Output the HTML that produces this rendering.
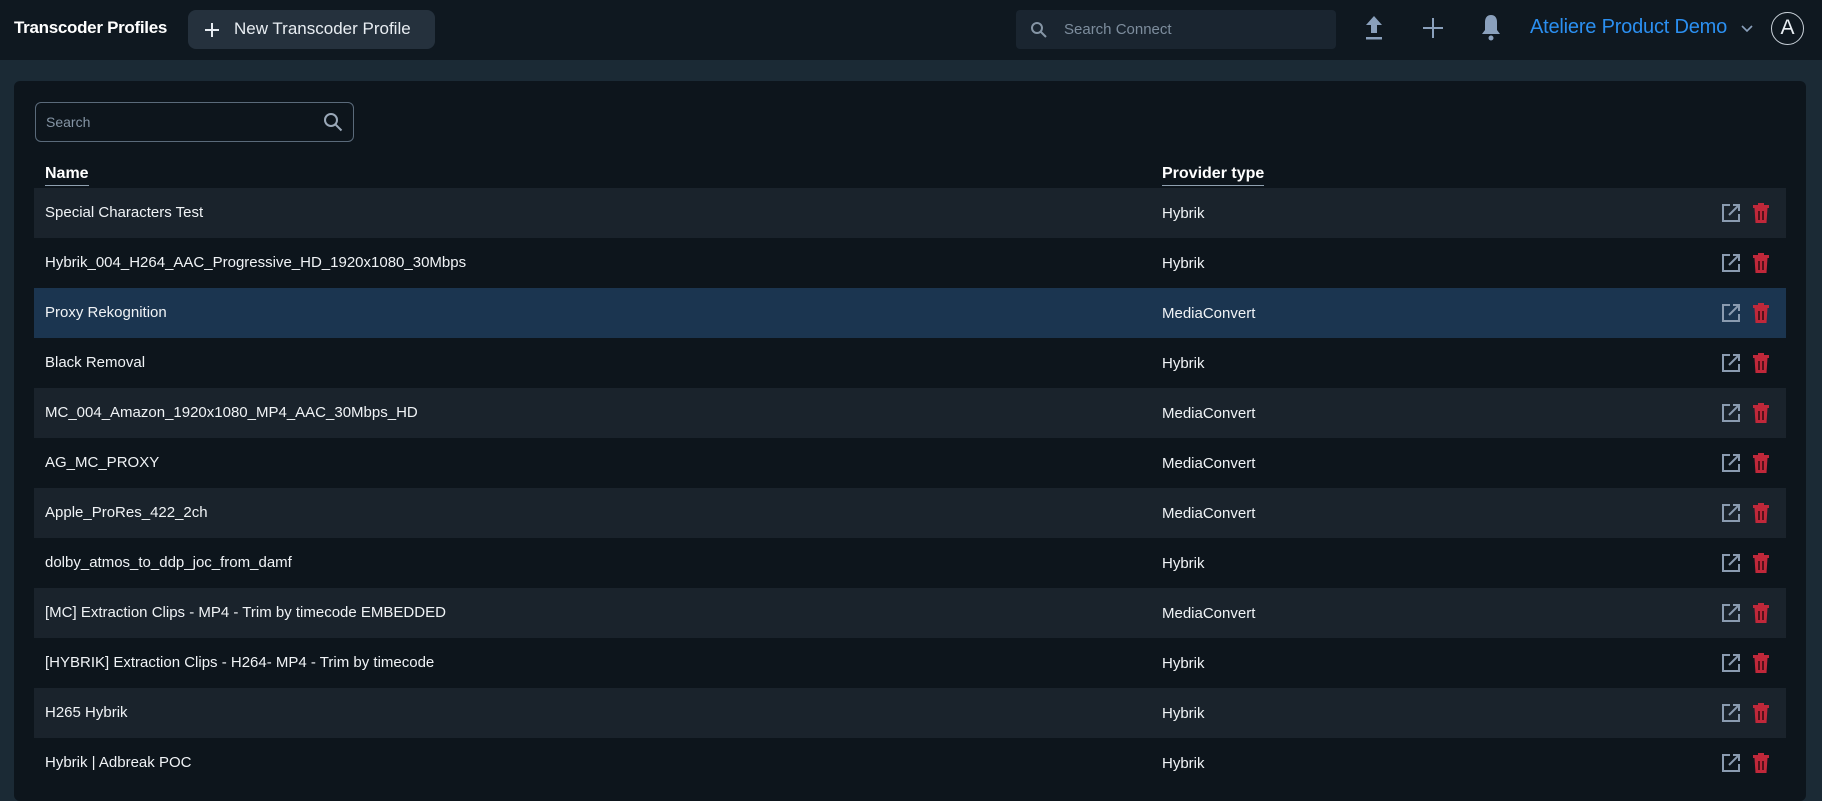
<!DOCTYPE html>
<html><head><meta charset="utf-8"><style>
*{box-sizing:border-box;margin:0;padding:0}
body{width:1822px;height:787px;overflow:hidden;background:#1b2a35;font-family:"Liberation Sans",sans-serif;color:#e8edf2;position:relative}
.hdr{position:absolute;left:0;top:0;width:1822px;height:60px;background:#0f1820}
.title{position:absolute;left:14px;top:18px;font-size:17px;font-weight:bold;color:#fff;letter-spacing:-0.3px}
.btn{position:absolute;left:188px;top:10px;width:247px;height:39px;background:#25313d;border-radius:8px;color:#e8edf2;font-size:17px}
.btn span{position:absolute;left:46px;top:9px}
.sc{position:absolute;left:1016px;top:10px;width:320px;height:39px;background:#1a2530;border-radius:4px}
.sc span{position:absolute;left:48px;top:11px;font-size:15px;color:#7d8d9d}
.org{position:absolute;left:1530px;top:16px;font-size:20px;color:#2b8ff0;letter-spacing:-0.2px}
.av{position:absolute;left:1771px;top:12px;width:33px;height:33px;border:1.5px solid #c8d0d8;border-radius:50%;color:#e8edf2;font-size:21px;text-align:center;line-height:30px}
.panel{position:absolute;left:14px;top:81px;width:1792px;height:720px;background:#0d151c;border-radius:6px}
.srch{position:absolute;left:35px;top:102px;width:319px;height:40px;border:1.5px solid #5a6a7a;border-radius:6px}
.srch span{position:absolute;left:10px;top:11px;font-size:14px;color:#8595a5}
.th{position:absolute;top:165px;font-size:16px;font-weight:bold;color:#fff;border-bottom:1.5px solid #8fa0b0;padding-bottom:2px}
.row{position:absolute;left:34px;width:1752px;height:50px;font-size:15px;color:#f0f3f6}
.row .n{position:absolute;left:11px;top:16px}
.row .p{position:absolute;left:1128px;top:17px}
.row svg{position:absolute;top:15px}
.o{background:#1a232c}.sel{background:#1b3550}
</style></head><body>
<div class="hdr">
<div class="title">Transcoder Profiles</div>
<div class="btn"><svg style="position:absolute;left:16px;top:12px" width="16" height="16"><path d="M8 1v14M1 8h14" stroke="#e8edf2" stroke-width="2"/></svg><span>New Transcoder Profile</span></div>
<div class="sc"><svg style="position:absolute;left:14px;top:11px" width="18" height="18"><circle cx="7" cy="7" r="5" fill="none" stroke="#8595a5" stroke-width="2"/><path d="M11 11l5 5" stroke="#8595a5" stroke-width="2"/></svg><span>Search Connect</span></div>
<svg style="position:absolute;left:1363px;top:14px" width="22" height="28"><path d="M11 2L3 11h5v8h6v-8h5z" fill="#8aa0bc"/><rect x="3" y="23" width="16" height="2.5" fill="#8aa0bc"/></svg>
<svg style="position:absolute;left:1422px;top:17px" width="22" height="22"><path d="M11 1v20M1 11h20" stroke="#8aa0bc" stroke-width="2"/></svg>
<svg style="position:absolute;left:1480px;top:13px" width="22" height="30"><path d="M11 2c-4 0-6 3-6 7v8l-3 4h18l-3-4V9c0-4-2-7-6-7z" fill="#8aa0bc"/><circle cx="11" cy="25" r="2.5" fill="#8aa0bc"/></svg>
<div class="org">Ateliere Product Demo</div>
<svg style="position:absolute;left:1741px;top:24px" width="12" height="10"><path d="M1 2l5 5 5-5" stroke="#8aa0bc" stroke-width="1.6" fill="none"/></svg>
<div class="av">A</div>
</div>
<div class="panel"></div>
<div class="srch"><span>Search</span><svg style="position:absolute;left:287px;top:9px" width="20" height="20"><circle cx="8" cy="8" r="6" fill="none" stroke="#9aa8b8" stroke-width="2"/><path d="M12.5 12.5l6 6" stroke="#9aa8b8" stroke-width="2"/></svg></div>
<div class="th" style="left:45px">Name</div>
<div class="th" style="left:1162px">Provider type</div>
<div id="rows"></div>
<script>
var d=[["Special Characters Test","Hybrik"],["Hybrik_004_H264_AAC_Progressive_HD_1920x1080_30Mbps","Hybrik"],["Proxy Rekognition","MediaConvert"],["Black Removal","Hybrik"],["MC_004_Amazon_1920x1080_MP4_AAC_30Mbps_HD","MediaConvert"],["AG_MC_PROXY","MediaConvert"],["Apple_ProRes_422_2ch","MediaConvert"],["dolby_atmos_to_ddp_joc_from_damf","Hybrik"],["[MC] Extraction Clips - MP4 - Trim by timecode EMBEDDED","MediaConvert"],["[HYBRIK] Extraction Clips - H264- MP4 - Trim by timecode","Hybrik"],["H265 Hybrik","Hybrik"],["Hybrik | Adbreak POC","Hybrik"]];
var h="";
d.forEach(function(r,i){var c=i==2?"sel":(i%2==0?"o":"");
h+='<div class="row '+c+'" style="top:'+(188+i*50)+'px"><span class="n">'+r[0]+'</span><span class="p">'+r[1]+'</span>'+
'<svg style="left:1687px" width="20" height="20"><path d="M9 2H2v16h16v-7" fill="none" stroke="#8a9bb0" stroke-width="2"/><path d="M8 12L18 2M12 2h6v6" fill="none" stroke="#8a9bb0" stroke-width="2"/></svg>'+
'<svg style="left:1718px" width="18" height="20"><rect x="1" y="2" width="16" height="3" fill="#c0283a"/><rect x="6" y="0" width="6" height="3" fill="#c0283a"/><path d="M2.5 5h13l-1 15h-11z" fill="#c0283a"/><path d="M7 8v9M11 8v9" stroke="#2a0a10" stroke-width="1.5"/></svg></div>';});
document.getElementById("rows").innerHTML=h;
</script>
</body></html>
